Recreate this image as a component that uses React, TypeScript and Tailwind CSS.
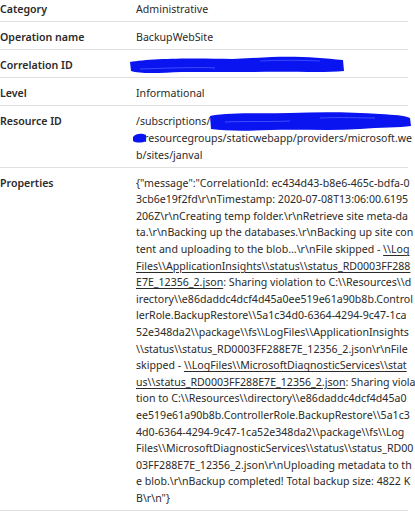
const props: [string, boolean][][] = [
  [[String.raw`{"message":"CorrelationId: ec434d43-b8e6-465c-bdfa-0`, false]],
  [[String.raw`3cb6e19f2fd\r\nTimestamp: 2020-07-08T13:06:00.6195`, false]],
  [[String.raw`206Z\r\nCreating temp folder.\r\nRetrieve site meta-da`, false]],
  [[String.raw`ta.\r\nBacking up the databases.\r\nBacking up site con`, false]],
  [
    [String.raw`tent and uploading to the blob...\r\nFile skipped - `, false],
    [String.raw`\\Log`, true],
  ],
  [[String.raw`Files\\ApplicationInsights\\status\\status_RD0003FF288`, true]],
  [
    [String.raw`E7E_12356_2.json`, true],
    [String.raw`: Sharing violation to C:\\Resources\\d`, false],
  ],
  [[String.raw`irectory\\e86daddc4dcf4d45a0ee519e61a90b8b.Control`, false]],
  [[String.raw`lerRole.BackupRestore\\5a1c34d0-6364-4294-9c47-1ca`, false]],
  [[String.raw`52e348da2\\package\\fs\\LogFiles\\ApplicationInsights`, false]],
  [[String.raw`\\status\\status_RD0003FF288E7E_12356_2.json\r\nFile`, false]],
  [
    [String.raw`skipped - `, false],
    [String.raw`\\LogFiles\\MicrosoftDiagnosticServices\\stat`, true],
  ],
  [
    [String.raw`us\\status_RD0003FF288E7E_12356_2.json`, true],
    [String.raw`: Sharing viola`, false],
  ],
  [[String.raw`tion to C:\\Resources\\directory\\e86daddc4dcf4d45a0`, false]],
  [[String.raw`ee519e61a90b8b.ControllerRole.BackupRestore\\5a1c3`, false]],
  [[String.raw`4d0-6364-4294-9c47-1ca52e348da2\\package\\fs\\Log`, false]],
  [[String.raw`Files\\MicrosoftDiagnosticServices\\status\\status_RD00`, false]],
  [[String.raw`03FF288E7E_12356_2.json\r\nUploading metadata to th`, false]],
  [[String.raw`e blob.\r\nBackup completed! Total backup size: 4822 K`, false]],
  [[String.raw`B\r\n"}`, false]],
];

function Row({ label, children }: { label: string; children: React.ReactNode }) {
  return (
    <div className="relative flex border-b border-[#e1dfdd] pt-[7px] pb-[3.5px]">
      <div className="w-[136px] shrink-0 font-semibold">{label}</div>
      <div className="min-w-0 flex-1 whitespace-nowrap">{children}</div>
    </div>
  );
}

// blue marker scribbles used to hide ids
function CorrelationScribble() {
  return (
    <svg className="pointer-events-none absolute left-0 top-0" width="408" height="28" viewBox="0 0 408 28">
      <path
        d="M130 12 C150 8 200 8 232 9 L272 7 C300 6 322 8 343 10 L344 21 C322 23 292 21 252 22 L182 22 C160 23 140 24 131 21 Z"
        fill="#0a14f0"
      />
      <path d="M140 19 C170 18 200 17 215 18" stroke="#3b4cff" strokeWidth="1" fill="none" />
      <path d="M260 11 C280 10 300 10 320 11" stroke="#3347ff" strokeWidth="1" fill="none" />
    </svg>
  );
}

function ResourceScribble() {
  return (
    <svg className="pointer-events-none absolute left-0 top-0" width="415" height="60" viewBox="0 0 415 60">
      <path
        d="M210 10 C232 6 260 8 290 7 C320 6 350 6 380 8 C395 9 403 9 410 12 L411 20 C400 22 380 21 360 23 C330 25 300 23 270 24 C245 25 226 25 211 23 Z"
        fill="#0a14f0"
      />
      <path d="M225 16 C250 15 270 16 290 15" stroke="#3b4cff" strokeWidth="1" fill="none" />
      <path d="M320 12 C340 11 360 12 375 12" stroke="#3b4cff" strokeWidth="1" fill="none" />
      <path d="M133 31 C136 27 142 27 146 29 L146 35 C142 37 136 37 133 35 Z" fill="#0a14f0" />
    </svg>
  );
}

export default function App() {
  return (
    <div className="min-h-[515px] overflow-hidden bg-white">
      <div
        className="-mt-[6px] w-[408px] text-[10.6px] leading-[16.6px] text-[#2b2a29]"
        style={{ fontFamily: '"Noto Sans", "Open Sans", sans-serif' }}
      >
        <Row label="Category">Administrative</Row>
        <Row label="Operation name">BackupWebSite</Row>
        <Row label="Correlation ID">
          <span className="invisible">00000000-0000-0000-0000-000000000000</span>
          <CorrelationScribble />
        </Row>
        <Row label="Level">Informational</Row>
        <Row label="Resource ID">
          <div>/subscriptions/</div>
          <div className="pl-[8px]">resourcegroups/staticwebapp/providers/microsoft.we</div>
          <div>b/sites/janval</div>
          <ResourceScribble />
        </Row>
        <Row label="Properties">
          {props.map((line, i) => (
            <div key={i}>
              {line.map(([text, link], j) =>
                link ? (
                  <span key={j} className="underline underline-offset-[2px]">
                    {text}
                  </span>
                ) : (
                  <span key={j}>{text}</span>
                )
              )}
            </div>
          ))}
        </Row>
      </div>
    </div>
  );
}
